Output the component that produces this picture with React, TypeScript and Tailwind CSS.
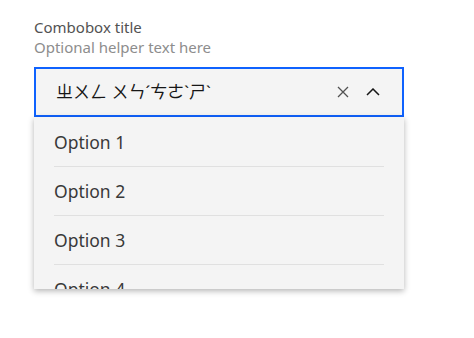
export default function App() {
  const options = ["Option 1", "Option 2", "Option 3", "Option 4"];
  return (
    <div className="min-h-[338px] w-[474px] bg-white pl-[34px] pt-[17px] font-['Noto_Sans','Noto_Sans_CJK_TC',sans-serif]">
      <div className="text-[15px] leading-[20px] text-[#525252]">Combobox title</div>
      <div className="text-[15px] leading-[20px] text-[#8d8d8d]">Optional helper text here</div>
      <div className="relative mt-[10px] w-[370px]">
        <div className="flex h-[50px] items-center border-2 border-[#0f62fe] bg-[#f4f4f4] pl-[20px] pr-[22px]">
          <span className="flex-1 text-[17px] text-[#161616]">ㄓㄨㄥ ㄨㄣˊㄘㄜˋㄕˋ</span>
          <svg width="12" height="12" viewBox="0 0 12 12" className="mr-[17px]">
            <path d="M1 1L11 11M11 1L1 11" stroke="#525252" strokeWidth="1.3" />
          </svg>
          <svg width="14" height="8" viewBox="0 0 14 8">
            <path d="M1 7L7 1L13 7" fill="none" stroke="#161616" strokeWidth="1.5" />
          </svg>
        </div>
        <div className="h-[172px] overflow-hidden bg-[#f4f4f4] shadow-[0_2px_6px_rgba(0,0,0,0.3)]">
          {options.map((o, i) => (
            <div key={o} className="px-[20px]">
              <div
                className={`flex h-[49px] items-center border-t text-[17.5px] text-[#393939] ${
                  i === 0 ? "border-transparent" : "border-[#e0e0e0]"
                }`}
              >
                {o}
              </div>
            </div>
          ))}
        </div>
      </div>
    </div>
  );
}
